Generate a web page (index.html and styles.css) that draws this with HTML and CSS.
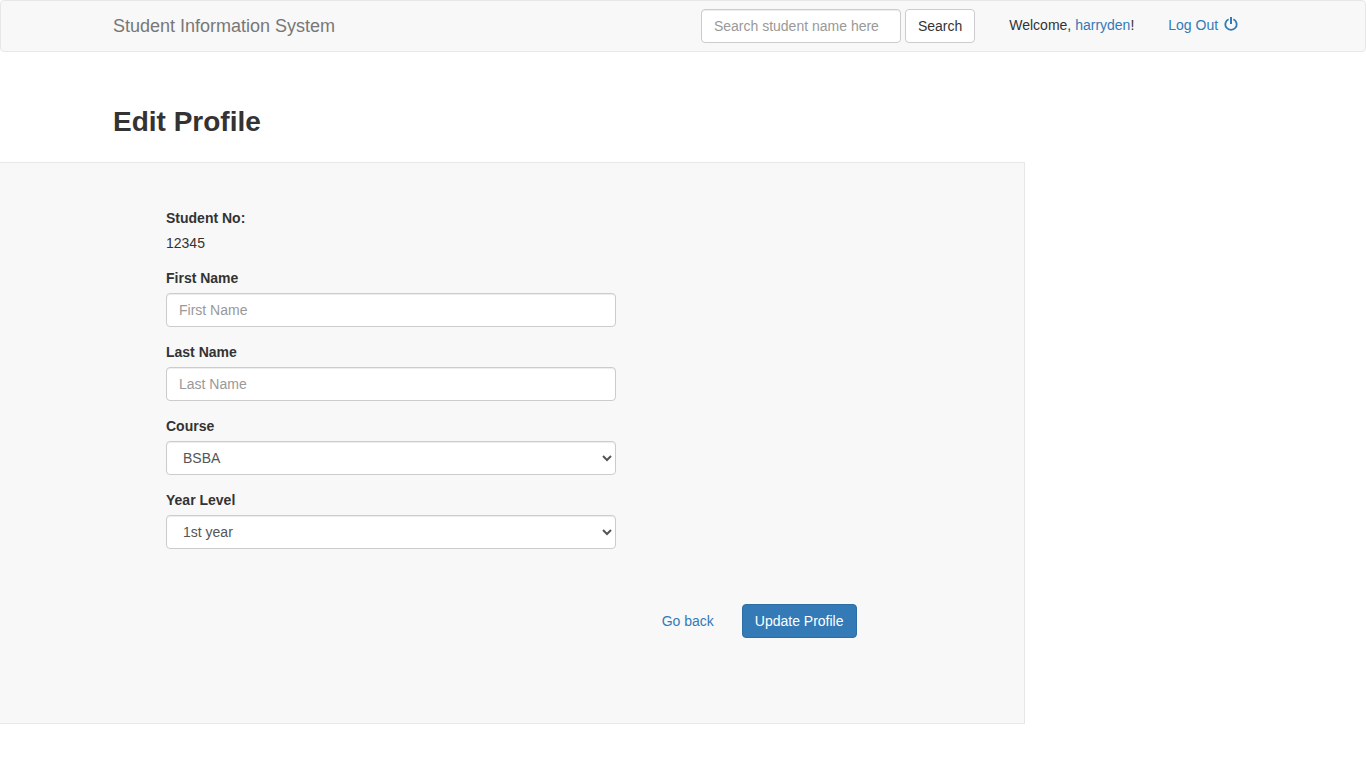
FILE: index.html
```
<!DOCTYPE html>
<html lang="en">
  <head>
    <meta charset="UTF-8" />
    <meta name="viewport" content="width=device-width, initial-scale=1.0" />
    <title>Student Information System</title>
    <link rel="stylesheet" href="styles.css">
  </head>
  <body>
    <nav class="navbar">
      <div class="container navbar-inner">
        <a class="navbar-brand" href="#">Student Information System</a>
        <form class="navbar-form">
          <input type="text" class="form-control" placeholder="Search student name here" aria-label="Search student name" />
          <button type="submit" class="btn btn-default">Search</button>
        </form>
        <div class="navbar-user">
          <p>Welcome, <a href="#">harryden</a>!</p>
          <a href="#">Log Out
            <svg class="icon" viewBox="0 0 14 14" aria-hidden="true">
              <path d="M4.6 2.2A5.64 5.64 0 1 0 9.4 2.2" fill="none" stroke="currentColor" stroke-width="1.8" />
              <path d="M7 0v7" fill="none" stroke="currentColor" stroke-width="2" />
            </svg>
          </a>
        </div>
      </div>
    </nav>

    <div class="container">
      <h1>Edit Profile</h1>
    </div>

    <form class="panel">
      <div class="form-group">
        <strong class="label">Student No:</strong>
        <p>12345</p>
      </div>
      <div class="form-group">
        <label class="label" for="first-name">First Name</label>
        <input type="text" id="first-name" class="form-control" placeholder="First Name" />
      </div>
      <div class="form-group">
        <label class="label" for="last-name">Last Name</label>
        <input type="text" id="last-name" class="form-control" placeholder="Last Name" />
      </div>
      <div class="form-group">
        <label class="label" for="course">Course</label>
        <select id="course" class="form-control">
          <option>BSBA</option>
        </select>
      </div>
      <div class="form-group">
        <label class="label" for="year">Year Level</label>
        <select id="year" class="form-control">
          <option>1st year</option>
        </select>
      </div>
      <div class="actions">
        <a href="#">Go back</a>
        <button type="submit" class="btn btn-primary">Update Profile</button>
      </div>
    </form>
  </body>
</html>
```
FILE: styles.css
```
* {
  box-sizing: border-box;
}

body {
  margin: 0;
  font-family: "Liberation Sans", Arial, sans-serif;
  font-size: 14px;
  line-height: 20px;
  color: #333;
  background-color: #fff;
}

a {
  color: #337ab7;
  text-decoration: none;
}

p {
  margin: 0;
}

.container {
  max-width: 1170px;
  margin: 0 auto;
  padding: 0 15px;
}

.navbar {
  background-color: #f8f8f8;
  border: 1px solid #e7e7e7;
  border-radius: 4px;
}

.navbar-inner {
  display: flex;
  align-items: center;
  min-height: 50px;
}

.navbar-brand {
  margin-right: auto;
  font-size: 18px;
  color: #777;
}

.navbar-form {
  display: flex;
  gap: 4px;
}

.navbar-form .form-control {
  width: 200px;
}

.navbar-user {
  display: flex;
  gap: 34px;
  padding: 0 15px 2px 34px;
}

.icon {
  width: 14px;
  height: 14px;
  margin-left: 2px;
  vertical-align: -1px;
}

h1 {
  margin: 55px 0 25px;
  font-size: 28px;
  line-height: 30px;
}

.panel {
  width: 75%;
  padding: 45px 167px 85px 166px;
  background-color: #f8f8f8;
  border: 1px solid #e7e7e7;
  border-left: 0;
}

.form-group {
  max-width: 450px;
  margin-bottom: 15px;
}

.label {
  display: block;
  margin-bottom: 5px;
  font-weight: bold;
}

.form-control {
  display: block;
  width: 100%;
  height: 34px;
  padding: 6px 12px;
  font-family: inherit;
  font-size: 14px;
  line-height: 20px;
  color: #555;
  background-color: #fff;
  border: 1px solid #ccc;
  border-radius: 4px;
  box-shadow: inset 0 1px 1px rgba(0, 0, 0, 0.075);
}

.form-control::placeholder {
  color: #999;
}

.btn {
  height: 34px;
  padding: 6px 12px;
  font-family: inherit;
  font-size: 14px;
  line-height: 20px;
  border: 1px solid transparent;
  border-radius: 4px;
  cursor: pointer;
}

.btn-default {
  color: #333;
  background-color: #fff;
  border-color: #ccc;
}

.btn-primary {
  color: #fff;
  background-color: #337ab7;
  border-color: #2e6da4;
}

.actions {
  display: flex;
  justify-content: flex-end;
  align-items: baseline;
  gap: 28px;
  margin-top: 55px;
}
```
